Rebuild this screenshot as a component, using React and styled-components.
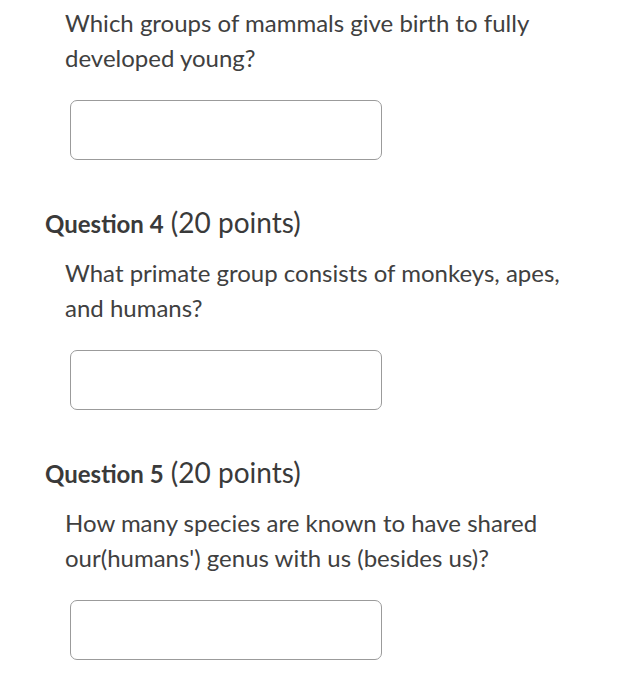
import styled, { createGlobalStyle } from "styled-components";

const GlobalStyle = createGlobalStyle`
  body {
    margin: 0;
    background: #ffffff;
    font-family: Lato, "Open Sans", sans-serif;
    color: #3f3f3f;
  }
`;

const questions = [
  { number: null, points: null, text: ["Which groups of mammals give birth to fully", "developed young?"] },
  { number: 4, points: 20, text: ["What primate group consists of monkeys, apes,", "and humans?"] },
  { number: 5, points: 20, text: ["How many species are known to have shared", "our(humans') genus with us (besides us)?"] },
];

const App = () => {
  return (
    <Page>
      <GlobalStyle />
      {questions.map((q, i) => (
        <Question key={i}>
          {q.number && (
            <Heading>
              <b>Question {q.number}</b> <span>({q.points} points)</span>
            </Heading>
          )}
          <Prompt>
            {q.text.map((line, j) => (
              <div key={j}>{line}</div>
            ))}
          </Prompt>
          <AnswerInput type="text" aria-label="Answer" />
        </Question>
      ))}
    </Page>
  );
};

const Page = styled.div`
  padding: 5px 0 0 45px;
  display: flex;
  flex-direction: column;
  gap: 44px;
`;

const Question = styled.section`
  display: flex;
  flex-direction: column;
  align-items: flex-start;
`;

const Heading = styled.h3`
  margin: 0 0 13px;
  font-weight: 400;
  font-size: 28px;
  line-height: 36px;
  color: #3a3a3a;

  b {
    font-weight: 700;
    font-size: 24px;
  }
`;

const Prompt = styled.div`
  margin-left: 20px;
  font-size: 24px;
  line-height: 35px;
  color: #404040;
`;

const AnswerInput = styled.input`
  box-sizing: border-box;
  margin: 25px 0 0 25px;
  width: 312px;
  height: 60px;
  border: 1.5px solid #9b9b9b;
  border-radius: 7px;
  background: #fff;
  outline: none;
`;

export default App;
